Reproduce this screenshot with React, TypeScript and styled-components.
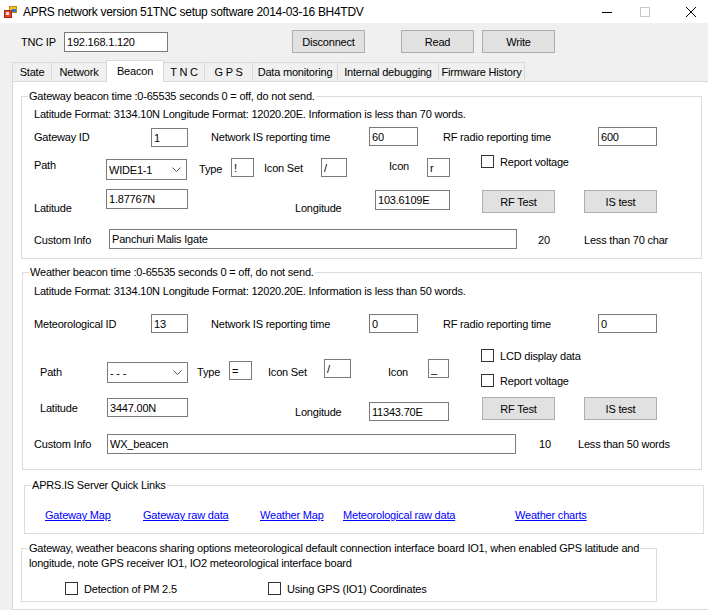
import React from 'react'
import styled, { createGlobalStyle } from 'styled-components'

const GlobalStyle = createGlobalStyle`
  html,
  body {
    margin: 0;
    height: 100%;
    overflow: hidden;
    background: #f0f0f0;
  }

  body {
    font-family: "Liberation Sans", Arial, sans-serif;
    font-size: 11px;
    letter-spacing: -0.2px;
    color: #000;
  }
`

const Window = styled.div`
  width: 708px;
  height: 610px;
  display: flex;
  flex-direction: column;
  background: #f0f0f0;
  overflow: hidden;
`

const TitleBar = styled.div`
  height: 23px;
  flex: none;
  display: flex;
  align-items: center;
  background: #fff;
  padding-left: 4px;
`

const TitleText = styled.span`
  margin-left: 6px;
  font-size: 12px;
  letter-spacing: -0.3px;
  white-space: nowrap;
`

const Controls = styled.div`
  margin-left: auto;
  display: flex;
  align-items: center;
  gap: 28px;
  padding-right: 12px;

  svg:last-child {
    margin-left: 8px;
  }
`

const Toolbar = styled.div`
  height: 37px;
  flex: none;
  display: flex;
  align-items: center;
  padding-left: 21px;
`

// shared props for controls placed in a row
interface iCell {
  $w?: number
  $h?: number
  $ml?: number
  $dy?: number
}

const Label = styled.span<iCell>`
  flex: none;
  width: ${({ $w }) => ($w ? `${$w}px` : 'auto')};
  margin-left: ${({ $ml }) => $ml ?? 0}px;
  margin-top: ${({ $dy }) => $dy ?? 0}px;
  line-height: 14px;
  white-space: nowrap;
`

const Field = styled.input<iCell>`
  flex: none;
  box-sizing: border-box;
  width: ${({ $w }) => $w}px;
  height: ${({ $h }) => $h ?? 19}px;
  margin: ${({ $dy }) => $dy ?? 0}px 0 0 ${({ $ml }) => $ml ?? 0}px;
  padding: 0 0 0 2px;
  border: 1px solid #7a7a7a;
  border-radius: 0;
  background: #fff;
  color: #000;
  font: inherit;
  letter-spacing: inherit;
  outline: none;
`

const Combo = styled.div<iCell>`
  flex: none;
  box-sizing: border-box;
  width: ${({ $w }) => $w}px;
  height: 21px;
  margin: ${({ $dy }) => $dy ?? 0}px 0 0 ${({ $ml }) => $ml ?? 0}px;
  padding: 0 5px 0 2px;
  display: flex;
  align-items: center;
  justify-content: space-between;
  border: 1px solid #7a7a7a;
  background: #fff;
`

const Button = styled.button<iCell>`
  flex: none;
  box-sizing: border-box;
  width: ${({ $w }) => $w ?? 73}px;
  height: 23px;
  margin: ${({ $dy }) => $dy ?? 0}px 0 0 ${({ $ml }) => $ml ?? 0}px;
  padding: 0;
  border: 1px solid #adadad;
  border-radius: 0;
  background: #e1e1e1;
  color: #000;
  font: inherit;
  letter-spacing: inherit;
`

const Check = styled.label<iCell>`
  flex: none;
  display: flex;
  align-items: center;
  gap: 6px;
  height: 13px;
  width: ${({ $w }) => ($w ? `${$w}px` : 'auto')};
  margin: ${({ $dy }) => $dy ?? 0}px 0 0 ${({ $ml }) => $ml ?? 0}px;
  line-height: 14px;
  white-space: nowrap;
`

const CheckBox = styled.span`
  flex: none;
  box-sizing: border-box;
  width: 13px;
  height: 13px;
  border: 1px solid #333;
  background: #fff;
`

const CheckStack = styled.div<iCell>`
  flex: none;
  display: flex;
  flex-direction: column;
  gap: 12px;
  margin: ${({ $dy }) => $dy ?? 0}px 0 0 ${({ $ml }) => $ml ?? 0}px;
`

const TabStrip = styled.div`
  height: 21px;
  flex: none;
  display: flex;
  align-items: flex-end;
  padding-left: 12px;
`

const Tab = styled.div<{ $w: number; $active?: boolean }>`
  position: relative;
  z-index: ${({ $active }) => ($active ? 1 : 0)};
  box-sizing: border-box;
  width: ${({ $w }) => $w}px;
  height: ${({ $active }) => ($active ? 22 : 19)}px;
  margin: 0 -1px ${({ $active }) => ($active ? -1 : 0)}px 0;
  padding-bottom: ${({ $active }) => ($active ? 2 : 0)}px;
  display: flex;
  align-items: center;
  justify-content: center;
  border: 1px solid #d9d9d9;
  border-bottom: none;
  background: ${({ $active }) => ($active ? '#fff' : '#f0f0f0')};
  white-space: nowrap;
`

const Page = styled.div`
  flex: 1;
  margin-left: 12px;
  display: flex;
  flex-direction: column;
  background: #fff;
  border: 1px solid #d9d9d9;
  border-right: none;
`

const Group = styled.div<{ $ml: number; $mt: number; $w: number; $h: number }>`
  flex: none;
  box-sizing: border-box;
  width: ${({ $w }) => $w}px;
  height: ${({ $h }) => $h}px;
  margin: ${({ $mt }) => $mt}px 0 0 ${({ $ml }) => $ml}px;
  display: flex;
  flex-direction: column;
  border: 1px solid #dcdcdc;
`

const Caption = styled.div<{ $lh?: number }>`
  align-self: flex-start;
  margin: -8px 0 0 6px;
  padding: 0 1px;
  background: #fff;
  line-height: ${({ $lh }) => $lh ?? 14}px;
  white-space: nowrap;
`

const Body = styled.div<{ $pl: number }>`
  display: flex;
  flex-direction: column;
  padding-left: ${({ $pl }) => $pl}px;
`

const Row = styled.div<{ $h?: number }>`
  flex: none;
  display: flex;
  align-items: flex-start;
  height: ${({ $h }) => ($h ? `${$h}px` : 'auto')};
`

const Link = styled.a<iCell>`
  flex: none;
  width: ${({ $w }) => ($w ? `${$w}px` : 'auto')};
  margin-top: ${({ $dy }) => $dy ?? 0}px;
  line-height: 14px;
  color: #0000ff;
  text-decoration: underline;
  white-space: nowrap;
  cursor: pointer;
`

const AppIcon = () => (
  <svg width="13" height="12" viewBox="0 0 13 12">
    <rect x="5.5" y="0.5" width="7" height="6" fill="#f6c02a" stroke="#b88a10" />
    <rect x="8" y="3" width="4" height="3" fill="#3d6fd1" />
    <rect x="0.5" y="4.5" width="7" height="7" fill="#e2452d" stroke="#a62b17" />
    <rect x="2" y="6" width="3" height="3" fill="#fbe0d8" />
  </svg>
)

const Chevron = () => (
  <svg width="9" height="5" viewBox="0 0 9 5">
    <path d="M0.5 0.5 L4.5 4.5 L8.5 0.5" fill="none" stroke="#555" strokeWidth="1" />
  </svg>
)

const CheckField = ({ text, ...rest }: { text: string } & iCell) => (
  <Check {...rest}>
    <CheckBox />
    {text}
  </Check>
)

const tabs = [
  { name: 'State', w: 40 },
  { name: 'Network', w: 56 },
  { name: 'Beacon', w: 58, active: true },
  { name: 'T N C', w: 42 },
  { name: 'G P S', w: 49 },
  { name: 'Data monitoring', w: 86 },
  { name: 'Internal debugging', w: 102 },
  { name: 'Firmware History', w: 87 },
]

const links = [
  { name: 'Gateway Map', w: 98 },
  { name: 'Gateway raw data', w: 117 },
  { name: 'Weather Map', w: 83 },
  { name: 'Meteorological raw data', w: 172 },
  { name: 'Weather charts' },
]

const App = () => (
  <>
    <GlobalStyle />
    <Window>
      <TitleBar>
        <AppIcon />
        <TitleText>APRS network version 51TNC setup software 2014-03-16 BH4TDV</TitleText>
        <Controls>
          <svg width="10" height="10" viewBox="0 0 10 10">
            <path d="M0 5.5 H10" stroke="#000" strokeWidth="1" />
          </svg>
          <svg width="10" height="10" viewBox="0 0 10 10">
            <rect x="0.5" y="0.5" width="9" height="9" fill="none" stroke="#c8c8c8" />
          </svg>
          <svg width="10" height="10" viewBox="0 0 10 10">
            <path d="M0 0 L10 10 M10 0 L0 10" stroke="#000" strokeWidth="1" />
          </svg>
        </Controls>
      </TitleBar>

      <Toolbar>
        <Label $w={43}>TNC IP</Label>
        <Field $w={104} $h={20} defaultValue="192.168.1.120" readOnly />
        <Button $ml={124} $w={73}>Disconnect</Button>
        <Button $ml={36}>Read</Button>
        <Button $ml={8}>Write</Button>
      </Toolbar>

      <TabStrip>
        {tabs.map((t) => (
          <Tab key={t.name} $w={t.w} $active={t.active}>
            {t.name}
          </Tab>
        ))}
      </TabStrip>

      <Page>
        {/* gateway beacon */}
        <Group $ml={8} $mt={14} $w={681} $h={163}>
          <Caption>Gateway beacon time :0-65535 seconds 0 = off, do not send.</Caption>
          <Body $pl={12}>
            <Row $h={18}>
              <Label $dy={4}>
                Latitude Format: 3134.10N Longitude Format: 12020.20E. Information is less than 70 words.
              </Label>
            </Row>
            <Row $h={31}>
              <Label $w={117} $dy={9}>Gateway ID</Label>
              <Field $w={37} $dy={7} defaultValue="1" readOnly />
              <Label $ml={23} $w={158} $dy={9}>Network IS reporting time</Label>
              <Field $w={49} $dy={6} defaultValue="60" readOnly />
              <Label $ml={25} $w={155} $dy={9}>RF radio reporting time</Label>
              <Field $w={59} $dy={6} defaultValue="600" readOnly />
            </Row>
            <Row $h={32}>
              <Label $w={72} $dy={6}>Path</Label>
              <Combo $w={81} $dy={7}>
                WIDE1-1
                <Chevron />
              </Combo>
              <Label $ml={12} $w={32} $dy={10}>Type</Label>
              <Field $w={23} $dy={6} defaultValue="!" readOnly />
              <Label $ml={10} $w={57} $dy={9}>Icon Set</Label>
              <Field $w={26} $dy={6} defaultValue="/" readOnly />
              <Label $ml={42} $w={38} $dy={7}>Icon</Label>
              <Field $w={23} $dy={6} defaultValue="r" readOnly />
              <CheckField $ml={31} $dy={3} text="Report voltage" />
            </Row>
            <Row $h={38}>
              <Label $w={72} $dy={17}>Latitude</Label>
              <Field $w={82} $h={20} $dy={5} defaultValue="1.87767N" readOnly />
              <Label $ml={107} $w={80} $dy={17}>Longitude</Label>
              <Field $w={75} $h={20} $dy={6} defaultValue="103.6109E" readOnly />
              <Button $ml={32} $dy={6}>RF Test</Button>
              <Button $ml={29} $dy={6}>IS test</Button>
            </Row>
            <Row>
              <Label $w={75} $dy={11}>Custom Info</Label>
              <Field $w={408} $h={20} $dy={7} defaultValue="Panchuri Malis Igate" readOnly />
              <Label $ml={21} $w={46} $dy={11}>20</Label>
              <Label $dy={11}>Less than 70 char</Label>
            </Row>
          </Body>
        </Group>

        {/* weather beacon */}
        <Group $ml={9} $mt={13} $w={680} $h={198}>
          <Caption>Weather beacon time :0-65535 seconds 0 = off, do not send.</Caption>
          <Body $pl={11}>
            <Row $h={23}>
              <Label $dy={5}>
                Latitude Format: 3134.10N Longitude Format: 12020.20E. Information is less than 50 words.
              </Label>
            </Row>
            <Row $h={43}>
              <Label $w={117} $dy={15}>Meteorological ID</Label>
              <Field $w={37} $dy={12} defaultValue="13" readOnly />
              <Label $ml={23} $w={158} $dy={15}>Network IS reporting time</Label>
              <Field $w={49} $dy={12} defaultValue="0" readOnly />
              <Label $ml={25} $w={155} $dy={15}>RF radio reporting time</Label>
              <Field $w={59} $dy={12} defaultValue="0" readOnly />
            </Row>
            <Row $h={51}>
              <Label $ml={6} $w={67} $dy={20}>Path</Label>
              <Combo $w={81} $dy={17}>
                - - -
                <Chevron />
              </Combo>
              <Label $ml={9} $w={32} $dy={20}>Type</Label>
              <Field $w={23} $dy={16} defaultValue="=" readOnly />
              <Label $ml={16} $w={56} $dy={20}>Icon Set</Label>
              <Field $w={27} $dy={14} defaultValue="/" readOnly />
              <Label $ml={37} $w={40} $dy={20}>Icon</Label>
              <Field $w={21} $dy={14} defaultValue="_" readOnly />
              <CheckStack $ml={32} $dy={4}>
                <CheckField text="LCD display data" />
                <CheckField text="Report voltage" />
              </CheckStack>
            </Row>
            <Row $h={34}>
              <Label $ml={6} $w={67} $dy={5}>Latitude</Label>
              <Field $w={81} $dy={2} defaultValue="3447.00N" readOnly />
              <Label $ml={107} $w={74} $dy={9}>Longitude</Label>
              <Field $w={80} $dy={6} defaultValue="11343.70E" readOnly />
              <Button $ml={33} $dy={1}>RF Test</Button>
              <Button $ml={29} $dy={1}>IS test</Button>
            </Row>
            <Row>
              <Label $w={73} $dy={7}>Custom Info</Label>
              <Field $w={409} $h={20} $dy={4} defaultValue="WX_beacen" readOnly />
              <Label $ml={23} $w={39} $dy={7}>10</Label>
              <Label $dy={7}>Less than 50 words</Label>
            </Row>
          </Body>
        </Group>

        {/* quick links */}
        <Group $ml={11} $mt={15} $w={680} $h={49}>
          <Caption>APRS.IS Server Quick Links</Caption>
          <Body $pl={20}>
            <Row>
              {links.map((l) => (
                <Link key={l.name} $w={l.w} $dy={16}>
                  {l.name}
                </Link>
              ))}
            </Row>
          </Body>
        </Group>

        {/* sharing options */}
        <Group $ml={8} $mt={14} $w={636} $h={54}>
          <Caption $lh={15}>
            Gateway, weather beacons sharing options meteorological default connection interface board IO1, when enabled GPS latitude and
            <br />
            longitude, note GPS receiver IO1, IO2 meteorological interface board
          </Caption>
          <Body $pl={43}>
            <Row>
              <CheckField $w={203} $dy={11} text="Detection of PM 2.5" />
              <CheckField $dy={11} text="Using GPS (IO1) Coordinates" />
            </Row>
          </Body>
        </Group>
      </Page>
    </Window>
  </>
)

export default App
